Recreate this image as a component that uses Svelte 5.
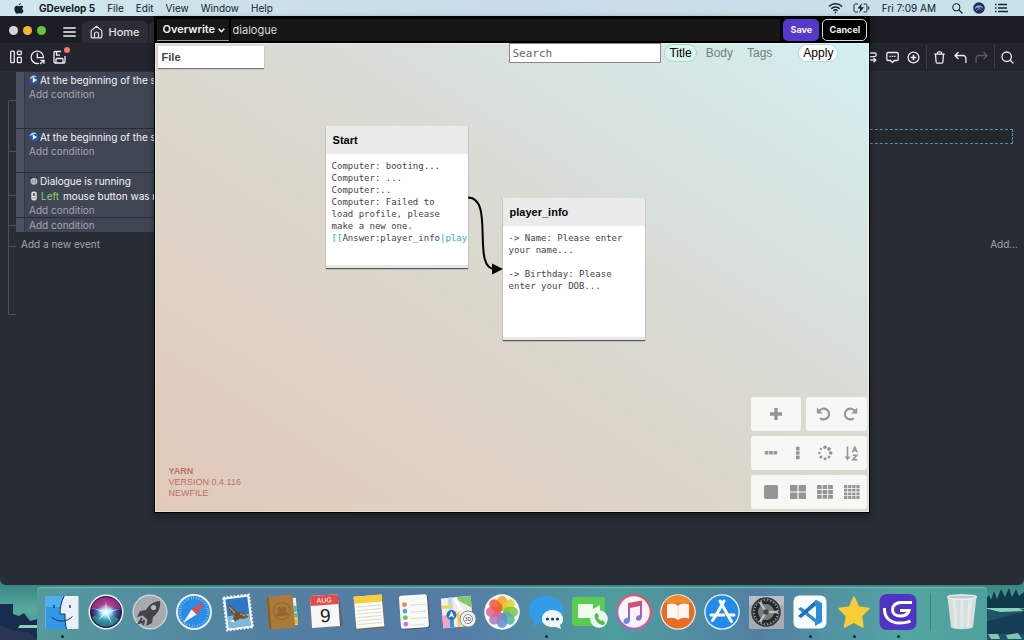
<script>
  const menus = ['File', 'Edit', 'View', 'Window', 'Help'];
  const letters = ['Title', 'Body', 'Tags'];
  let filter = $state('Title');
  let search = $state('');
  let variable = $state('dialogue');
  let mode = $state('Overwrite');

  const petals = [
    ['#f7a11b', 0], ['#d9d42c', 45], ['#7fc241', 90], ['#4fb59b', 135],
    ['#5b8fd6', 180], ['#a779bf', 225], ['#e0618b', 270], ['#ee5b35', 315]
  ];
  const ring = [0, 45, 90, 135, 180, 225, 270, 315];
  const teeth = Array.from({ length: 24 }, (_, i) => i * 15);
  const grid = (cols, rows, w, h, gap) =>
    Array.from({ length: cols * rows }, (_, i) => ({
      x: (i % cols) * (w + gap), y: Math.floor(i / cols) * (h + gap), w, h
    }));
  const sizes = [
    { label: 'Large nodes', cells: grid(1, 1, 14, 14, 0), w: 14, h: 14, r: 2 },
    { label: 'Medium nodes', cells: grid(2, 2, 7.4, 6.4, 1.2), w: 16, h: 14, r: 0.7 },
    { label: 'Small nodes', cells: grid(3, 3, 4.7, 4, 0.9), w: 16, h: 14, r: 0.6 },
    { label: 'Tiny nodes', cells: grid(4, 4, 3.3, 2.9, 0.8), w: 16, h: 14, r: 0.5 }
  ];
</script>

{#snippet home()}
  <svg width="13" height="14" viewBox="0 0 13 14" fill="none" stroke="currentColor" stroke-width="1.2" stroke-linejoin="round" stroke-linecap="round"><path d="M1.2 5.600 6.500 1.200l5.300 4.400V11.400a1.500 1.500 0 0 1-1.500 1.500H2.700a1.500 1.500 0 0 1-1.500-1.500ZM4.500 12.800V9a2 2 0 0 1 4 0v3.800"/></svg>
{/snippet}

{#snippet condition(kind)}
  <svg width="10" height="10" viewBox="0 0 10 10">
    {#if kind === 'scene'}
      <circle cx="5" cy="5" r="4.500" fill="#2457b0"/><path d="M.6 4A4.500 4.500 0 0 1 7.600 1.400L3.500 3Z" fill="#a9cdf6"/><path d="M3.800 2.400 8 5 3.800 7.700Z" fill="#fff"/>
    {:else if kind === 'dialogue'}
      <circle cx="5" cy="5.300" r="3.400" fill="#b9beba"/><path d="m3 4 1.500 1L3 6.500M6 3.500 7 5 5.500 6.800" stroke="#858a8c" fill="none"/><path d="M1 1.500h2M7 1.500h2" stroke="#222630"/>
    {:else}
      <rect x="2.300" y="0.500" width="5.400" height="9" rx="2" fill="#e4e4e0"/><rect x="3.800" y="2" width="2.400" height="3" fill="#6a6a6c"/><path d="M3 7h4" stroke="#999"/>
    {/if}
  </svg>
{/snippet}

<div class="desktop">
  <header class="menubar">
    <svg width="10" height="11" viewBox="0 0 20 23" fill="#16242f"><path d="M14 0c.2 2.500-2 4.800-4.300 4.800C9.500 2.500 11.700.2 14 0ZM17 12.200c0 3 2.600 4 2.700 4.100-.1.500-2.300 6.200-5 6.200-1.700 0-2-.9-4-.9s-2.500.9-4 .9C3.800 22.500.3 17 .3 12.300c0-4.300 2.800-6.700 5.500-6.700 1.900 0 3.300 1.200 4.500 1.200 1.100 0 2.900-1.300 5-1.300 1.500 0 3 .8 3.900 2.100-.4.300-2.200 1.600-2.200 4.600Z"/></svg>
    <nav>
      <b>GDevelop 5</b>
      {#each menus as m}<span>{m}</span>{/each}
    </nav>
    <div class="status">
      <svg width="15" height="12" viewBox="0 0 15 12" fill="none" stroke="#16242f" stroke-width="1.500"><path d="M1 4.500a9.300 9.300 0 0 1 13 0M3.200 6.700a6.200 6.200 0 0 1 8.600 0M5.400 8.800a3.100 3.100 0 0 1 4.200 0"/><circle cx="7.500" cy="10.600" r=".6" fill="#16242f" stroke-width=".6"/></svg>
      <svg width="17" height="10" viewBox="0 0 17 10" fill="none" stroke="#16242f"><path d="M5 1H2.500A1.500 1.500 0 0 0 1 2.500v5A1.500 1.500 0 0 0 2.500 9H5M10.500 1h2A1.500 1.500 0 0 1 14 2.500v5A1.500 1.500 0 0 1 12.500 9h-2M15.800 3.500v3"/><path d="M9 0 4.500 5.600h2.700L6.300 10 11 4.300H8Z" fill="#16242f" stroke="none"/></svg>
      <span>Fri 7:09 AM</span>
      <svg class="find" width="11" height="11" viewBox="0 0 11 11" fill="none" stroke="#16242f" stroke-width="1.100"><circle cx="4.300" cy="4.300" r="3.500"/><path d="m7 7 3.500 3.500"/></svg>
      <svg width="12" height="12" viewBox="0 0 12 12"><circle cx="6" cy="6" r="5.800" fill="#25265c"/><path d="M1.500 7.500C2 2.500 9 1.500 10.500 7 8.500 5 6.500 4.500 5.500 6 4.500 5.500 3 5.500 1.500 7.500Z" fill="#66b9e9"/><path d="M3 9c2-3 4-3 6-.5" stroke="#cf7ac9" fill="none"/></svg>
      <svg width="13" height="10" viewBox="0 0 13 10" stroke="#16242f" stroke-width="1.400"><path d="M3 1.500h9M3 5h9M3 8.500h10M0 1.500h1.500M0 5h1.500M0 8.500h1.500"/></svg>
    </div>
  </header>

  <main class="window">
    <div class="titlebar">
      <span class="light grey"></span><span class="light amber"></span><span class="light green"></span>
      <button class="plain burger" aria-label="Menu"><svg width="13" height="10" viewBox="0 0 13 10" stroke="#eee" stroke-width="1.300" stroke-linecap="round"><path d="M.7 1h11.600M.7 5h11.600M.7 9h11.600"/></svg></button>
      <button class="tab">{@render home()}Home</button>
      <button class="tab" aria-label="Scene tab"></button>
    </div>

    <div class="toolbar">
      <div class="tools">
        <button class="plain" aria-label="Panels"><svg width="12" height="14" viewBox="0 0 12 14" fill="none" stroke="#eee" stroke-width="1.300"><rect x=".7" y="1.200" width="3.600" height="11.500" rx="1"/><rect x="7.400" y="1.200" width="3.900" height="3.400" rx=".8"/><rect x="7.400" y="7.300" width="3.900" height="5.400" rx=".8"/></svg></button>
        <button class="plain" aria-label="History"><svg width="15" height="15" viewBox="0 0 15 15" fill="none" stroke="#eee" stroke-width="1.300" stroke-linecap="round"><path d="M13.500 7.200A6.200 6.200 0 1 0 8.500 13.400M7.300 3.500v4.200h6"/><path d="M11 10.300h3v3M13.800 10.500l-3.300 3"/></svg></button>
        <button class="plain save-tool" aria-label="Save project"><svg width="13" height="14" viewBox="0 0 13 14" fill="none" stroke="#eee" stroke-width="1.300" stroke-linejoin="round"><path d="M8 1.500H2.200A1.200 1.200 0 0 0 1 2.700v9A1.200 1.200 0 0 0 2.200 13h8.600a1.200 1.200 0 0 0 1.200-1.200V6M3.500 1.500v3.700H7M3 13V9.500A1 1 0 0 1 4 8.500h5a1 1 0 0 1 1 1V13"/></svg><i class="badge"></i></button>
      </div>
      <div class="tools right">
        <button class="plain" aria-label="Add event"><svg width="14" height="14" viewBox="0 0 14 14" fill="none" stroke="#eee" stroke-width="1.300"><path d="M2 3h8.500a1.800 1.800 0 0 1 0 3.600H6M5 10h6.500M9.500 8l2.300 2-2.300 2.200"/></svg></button>
        <button class="plain" aria-label="Add comment"><svg width="13" height="13" viewBox="0 0 13 13" fill="none" stroke="#eee" stroke-width="1.300" stroke-linejoin="round"><path d="M2 1.500h9a1.200 1.200 0 0 1 1.200 1.200v5.600A1.200 1.200 0 0 1 11 9.500H8.300L6.500 11.500 4.700 9.500H2A1.200 1.200 0 0 1 .8 8.300V2.700A1.200 1.200 0 0 1 2 1.500Z"/><path d="M3.500 5.400h1.400m.9 0h1.400m.9 0h1.400"/></svg></button>
        <button class="plain" aria-label="Add"><svg width="13" height="13" viewBox="0 0 13 13" fill="none" stroke="#eee" stroke-width="1.300"><circle cx="6.500" cy="6.500" r="5.400"/><path d="M6.500 3.700v5.600M3.700 6.500h5.600" stroke-width="1.700"/></svg></button>
        <span class="rule"></span>
        <button class="plain" aria-label="Delete"><svg width="13" height="13" viewBox="0 0 12 13" fill="none" stroke="#eee" stroke-width="1.300" stroke-linejoin="round"><path d="M.8 3.200h10.400M2 3.200l.6 7.800a1.200 1.200 0 0 0 1.200 1.100h4.400A1.200 1.200 0 0 0 9.400 11l.6-7.800M4 3V1.800A1 1 0 0 1 5 .8h2a1 1 0 0 1 1 1V3"/></svg></button>
        <button class="plain" aria-label="Undo"><svg width="13" height="12" viewBox="0 0 13 12" fill="none" stroke="#eee" stroke-width="1.300"><path d="M4.500 1 1 4.500 4.500 8M1 4.500h8A2.800 2.800 0 0 1 11.900 7.300V12"/></svg></button>
        <button class="plain" aria-label="Redo"><svg width="13" height="12" viewBox="0 0 13 12" fill="none" stroke="#5a5c66" stroke-width="1.300"><path d="M8.500 1 12 4.500 8.500 8M12 4.500H4A2.800 2.800 0 0 0 1.100 7.300V12"/></svg></button>
        <span class="rule"></span>
        <button class="plain" aria-label="Search events"><svg width="13" height="13" viewBox="0 0 13 13" fill="none" stroke="#eee" stroke-width="1.300" stroke-linecap="round"><circle cx="5.700" cy="5.700" r="4.700"/><path d="m9.200 9.200 2.800 2.800"/></svg></button>
      </div>
    </div>

    <div class="sheet">
      <div class="events">
        <section class="event tall">
          <div class="conditions">
            <p>{@render condition('scene')}At the beginning of the scene</p>
            <button class="add">Add condition</button>
          </div>
          <div></div>
        </section>
        <section class="event medium">
          <div class="conditions">
            <p>{@render condition('scene')}At the beginning of the scene</p>
            <button class="add">Add condition</button>
          </div>
          <div><div class="drop"></div></div>
        </section>
        <section class="event">
          <div class="conditions">
            <p>{@render condition('dialogue')}Dialogue is running</p>
            <p>{@render condition('mouse')}<em>Left</em>&nbsp;mouse button was released</p>
            <button class="add">Add condition</button>
          </div>
          <div></div>
        </section>
        <section class="event">
          <div class="conditions"><button class="add">Add condition</button></div>
          <div></div>
        </section>
      </div>
      <div class="footer"><button class="add">Add a new event</button><button class="add">Add...</button></div>
      <svg class="tree" width="8" height="216" viewBox="0 0 8 216" fill="none" stroke="#4b515b"><path d="M8 .5H.5v214H8M.5 51.500H8M.5 95.500H8M.5 125.500H8M.5 146.500H8"/></svg>
    </div>

    <div class="dialog">
      <div class="dialog-bar">
        <div class="mode"><select aria-label="Save mode" bind:value={mode}><option>Overwrite</option><option>Append</option></select><svg width="7" height="5" viewBox="0 0 7 5" fill="none" stroke="#fff" stroke-width="1.500"><path d="m.7.700 2.800 3L6.300.700"/></svg></div>
        <input class="name" aria-label="Variable name" bind:value={variable}/>
        <button class="save">Save</button>
        <button class="cancel">Cancel</button>
      </div>
      <div class="yarn">
        <div class="yarn-top">
          <button class="file">File</button>
          <div class="filters">
            <input class="search" placeholder="Search" aria-label="Search nodes" bind:value={search}/>
            {#each letters as l}
              <button class="pill" class:on={filter === l} onclick={() => (filter = l)}>{l}</button>
            {/each}
            <button class="pill apply">Apply</button>
          </div>
        </div>

        <div class="canvas">
          <svg class="link" width="40" height="84" viewBox="0 0 40 84"><path d="M0 6.500C27 6.500 3 78 27 78" fill="none" stroke="#000" stroke-width="2"/><path d="m24 72.500 11 5.500-11 5.500Z"/></svg>
          <article class="node start">
            <h2>Start</h2>
            <pre>Computer: booting...
Computer: ...
Computer:..
Computer: Failed to
load profile, please
make a new one.
<i>[[</i>Answer:player_info<i>|play</i></pre>
          </article>
          <article class="node info">
            <h2>player_info</h2>
            <pre>-&gt; Name: Please enter
your name...

-&gt; Birthday: Please
enter your DOB...</pre>
          </article>
        </div>

        <div class="yarn-bottom">
          <p class="version"><b>YARN</b><br/>VERSION 0.4.116<br/>NEWFILE</p>
          <div class="pads">
            <div class="pad-row">
              <div class="pad single"><button class="plain" aria-label="Add node"><svg width="12" height="12" viewBox="0 0 12 12" stroke="#949694" stroke-width="3.300"><path d="M6 0v12M0 6h12"/></svg></button></div>
              <div class="pad double">
                <button class="plain" aria-label="Undo change"><svg width="15" height="14" viewBox="0 0 15 14" fill="none" stroke="#949694" stroke-width="2.200"><path d="M3.200 4A5.400 5.400 0 1 1 4.200 11.200"/><path d="M.8.500v6.100h6Z" fill="#949694" stroke="none"/></svg></button>
                <button class="plain" aria-label="Redo change"><svg width="15" height="14" viewBox="0 0 15 14" fill="none" stroke="#949694" stroke-width="2.200"><path d="M11.800 4A5.400 5.400 0 1 0 10.800 11.200"/><path d="M14.200.5v6.100h-6Z" fill="#949694" stroke="none"/></svg></button>
              </div>
            </div>
            <div class="pad four">
              <button class="plain" aria-label="Align horizontally"><svg width="14" height="4" viewBox="0 0 14 4" fill="#949694"><rect x=".8" width="3.600" height="3.600" rx=".7"/><rect x="5.200" width="3.600" height="3.600" rx=".7"/><rect x="9.600" width="3.600" height="3.600" rx=".7"/></svg></button>
              <button class="plain" aria-label="Align vertically"><svg width="4" height="14" viewBox="0 0 4 14" fill="#949694"><rect y=".8" width="3.600" height="3.600" rx=".7"/><rect y="5.200" width="3.600" height="3.600" rx=".7"/><rect y="9.600" width="3.600" height="3.600" rx=".7"/></svg></button>
              <button class="plain" aria-label="Arrange in a spiral"><svg width="16" height="16" viewBox="-8 -8 16 16" fill="#949694">{#each ring as a, i}<circle cx="0" cy="-5.700" r={i < 3 ? 1.8 : i > 5 ? 1.2 : 1.500} transform="rotate({a})"/>{/each}</svg></button>
              <button class="plain" aria-label="Sort alphabetically"><svg width="15" height="15" viewBox="0 0 15 15" fill="none" stroke="#949694" stroke-width="1.600"><path d="M3.500.5v12"/><path d="M.7 10.500h5.600l-2.800 4Z" fill="#949694" stroke="none"/><path d="m8.500 6.300 2.300-5.300 2.300 5.300M9.300 4.500h3M8.800 9.200h4l-4 4.600h4.500"/></svg></button>
            </div>
            <div class="pad four">
              {#each sizes as s}
                <button class="plain" aria-label={s.label}><svg width={s.w} height={s.h} viewBox="0 0 {s.w} {s.h}" fill="#949694">{#each s.cells as c}<rect x={c.x} y={c.y} width={c.w} height={c.h} rx={s.r}/>{/each}</svg></button>
              {/each}
            </div>
          </div>
        </div>
      </div>
    </div>
  </main>

  <footer class="shore">
    <svg class="scenery" viewBox="0 0 1024 60" preserveAspectRatio="none">
      <defs><linearGradient id="sea" x1="0" y1="0" x2="0" y2="1"><stop offset="0" stop-color="#347f80"/><stop offset=".5" stop-color="#57a99d"/><stop offset="1" stop-color="#428c8c"/></linearGradient></defs>
      <rect width="1024" height="60" fill="url(#sea)"/>
      <path d="M0 24h13v10l6 2 5-3 6 8 8-2v21H0Z" fill="#172c50"/><path d="M0 45 12 50l16 2 10 8H0Z" fill="#2a3555"/><path d="M20 45h18v3H18Z" fill="#8bd0b8"/>
      <path d="M984 22l5-7 2 5 3-9 3 8 4-10 4 8 4-9 3 9 4-8 3 7 5-4v16h-40Z" fill="#0f3a49"/><path d="M984 29h40v31h-40Z" fill="#1f5468"/><path d="M984 28h34l6 3-24 1Z" fill="#8ccfc0"/><path d="m984 42 40-10v22h-40Z" fill="#173d56"/><path d="M988 54h10l2 5h-9ZM1006 55l12-2 4 6h-14Z" fill="#83c4b4"/>
    </svg>
    <nav class="dock" aria-label="Dock">
      <a href="#finder" class="open" aria-label="Finder"><svg viewBox="0 0 40 40"><rect x="3.500" y="4" width="33" height="33" rx="1" fill="#eaf0f6"/><path d="M3.500 4h18.700C19 10 18 16 18 22h5c0 6 .3 10 1.500 15h-21Z" fill="#3397e8"/><path d="M3.500 4h18.700C20 8 19 11 18.500 15H3.500Z" fill="#50b0ef"/><path d="M12 13v3M28 13v3" stroke="#162b45" stroke-width="1.300"/><path d="M9.500 25c6 5.500 15 5.500 21-.500M22.200 4C19 10 18 16 18 22h5c0 6 .3 10 1.500 15" fill="none" stroke="#183657" stroke-width="1"/></svg></a>
      <a href="#siri" aria-label="Siri"><svg viewBox="0 0 40 40"><defs><radialGradient id="siri"><stop stop-color="#e6ffff"/><stop offset=".25" stop-color="#8fd0e3"/><stop offset=".65" stop-color="#4b4f9a"/><stop offset="1" stop-color="#1d1533"/></radialGradient><radialGradient id="glow"><stop stop-color="#fff"/><stop offset=".4" stop-color="#d8f8ff" stop-opacity=".8"/><stop offset="1" stop-color="#bff" stop-opacity="0"/></radialGradient></defs><circle cx="20" cy="20" r="17.500" fill="#eee"/><circle cx="20" cy="20" r="16" fill="url(#siri)"/><path d="M5 18C7 1 33 1 35 18c-6-5-12-3-15 2-4-5-9-6-15-2Z" fill="#c22f86" opacity=".75"/><path d="M6 25l14-5 13 7c-6 10-21 11-27-2Z" fill="#27b3a8" opacity=".6"/><path d="M20 8l.8 11L34 17 21.500 20.800 26 32l-6.500-10-8 7 6.500-8.500L6 16l13 3Z" fill="#efffff" opacity=".8"/><circle cx="20" cy="20" r="8" fill="url(#glow)"/></svg></a>
      <a href="#launchpad" aria-label="Launchpad"><svg viewBox="0 0 40 40"><circle cx="20" cy="20" r="17.500" fill="#d4d7d8"/><circle cx="20" cy="20" r="16.300" fill="#a8abad"/><path d="M30 9c-7 .5-11 4-14 9l-6 1-3 6 6-1.500 4.500 4.500L16 34l6-3 1-6c5-4 8-9 7-16Z" fill="#434548"/><circle cx="23.500" cy="15.500" r="2.600" fill="#b8babb"/><path d="m12 26-3 5 6-2M14 28l-1 5" stroke="#434548" stroke-width="2" fill="none"/></svg></a>
      <a href="#safari" aria-label="Safari"><svg viewBox="0 0 40 40"><circle cx="20" cy="20" r="18" fill="#e8eef3"/><circle cx="20" cy="20" r="16" fill="#2b8ce6"/><circle cx="20" cy="20" r="14" fill="none" stroke="#b8e0ff" stroke-width="2" stroke-dasharray=".6 2"/><path d="m31 9-13.500 8.500L22.500 22.500Z" fill="#ee4748"/><path d="m9 31 13.500-8.500-5-5Z" fill="#f4f6f7"/></svg></a>
      <a href="#mail" aria-label="Mail"><svg viewBox="0 0 40 40"><g transform="rotate(-7 20 20)"><rect x="7" y="4" width="26" height="33" fill="#f6f6f1" stroke="#f6f6f1" stroke-width="2" stroke-dasharray="2 1.500"/><rect x="9" y="6" width="22" height="29" fill="#2c78c6"/><path d="M9 23h22v12H9Z" fill="#83b6df"/><path d="M11 11c4 2 6 6 8 9 4 0 8 2 11 6-4 2-7 1-9 1l-5 2-2-3 2-4c-4-3-5-7-5-11Z" fill="#725130"/><path d="m12 14 5 7M22 22l5 3" stroke="#c09a61" stroke-width="1.200"/><path d="m15 27-4 1 4 2Z" fill="#fff"/></g></svg></a>
      <a href="#contacts" aria-label="Contacts"><svg viewBox="0 0 40 40"><g transform="rotate(-5 20 20)"><path d="M31 7h4v27h-4Z" fill="#eee"/><path d="M32 15h3v6h-3Z" fill="#4bb9b0"/><path d="M32 22h3v5h-3Z" fill="#7aba58"/><path d="M32 28h3v5h-3Z" fill="#ebac37"/><rect x="6" y="3.500" width="26" height="33" rx="2" fill="#ac7a38"/><path d="M7 4v32" stroke="#8a5d28" stroke-width="2"/><circle cx="20" cy="19" r="8.500" fill="none" stroke="#946630"/><path d="M13 24c1-3 3-3 3-5-2-4 3-6 4-2 1-4 6-2 4 2 0 2 2 2 3 5Z" fill="#946630"/></g></svg></a>
      <a href="#calendar" aria-label="Calendar"><svg viewBox="0 0 40 40"><g transform="rotate(-4 20 20)"><path d="M5 6h29l2 29H5Z" fill="#5e6265"/><path d="M5 3h28v32H5Z" fill="#f7f7f6"/><path d="M5 3h28v10H5Z" fill="#e14b49"/><text x="19" y="10.500" font-family="Liberation Sans, sans-serif" font-size="7" text-anchor="middle" fill="#fff">AUG</text><text x="19" y="30" font-family="Liberation Sans, sans-serif" font-size="19" text-anchor="middle" fill="#222">9</text></g></svg></a>
      <a href="#notes" aria-label="Notes"><svg viewBox="0 0 40 40"><g transform="rotate(-5 20 20)"><rect x="5.500" y="4" width="28" height="33" fill="#756f54"/><rect x="5" y="3.500" width="28" height="32" fill="#fcfcf6"/><rect x="5" y="3.500" width="28" height="7" fill="#f7ce3b"/><path d="M7 14h24M7 17.500h24M7 21h24M7 24.500h24M7 28h24M7 31.500h24" stroke="#d5d5ce" stroke-width=".8"/></g></svg></a>
      <a href="#reminders" aria-label="Reminders"><svg viewBox="0 0 40 40"><g transform="rotate(-4 20 20)"><rect x="7" y="4" width="28" height="33" rx="2.500" fill="#44545b"/><rect x="6" y="3" width="28" height="33" rx="2.500" fill="#f9f9f9"/><circle cx="11" cy="12" r="2.400" fill="#ed8847"/><circle cx="11" cy="18.500" r="2.400" fill="#4ba7e8"/><circle cx="11" cy="25" r="2.400" fill="#70c74d"/><circle cx="11" cy="31.500" r="2.400" fill="#c67add"/><path d="M16 13h16M16 20h16M16 26.500h16M16 33h14" stroke="#d3d3d3" stroke-width=".8"/></g></svg></a>
      <a href="#maps" aria-label="Maps"><svg viewBox="0 0 40 40"><g transform="rotate(-5 20 20)"><rect x="4" y="5" width="30" height="30" fill="#f0eee5"/><path d="M16 5h18v12Z" fill="#8cc873"/><path d="M4 22h7v13H4Z" fill="#efa8bd"/><path d="M19 5c1 12 8 17 15 18" fill="none" stroke="#fff" stroke-width="3"/><path d="M13 5v30" stroke="#b8d8f0" stroke-width="4"/><path d="M13 22v13" stroke="#388cdd" stroke-width="4"/><path d="M4 14h11M20 20v15" stroke="#f2d15d" stroke-width="3"/></g><circle cx="13.500" cy="23" r="5" fill="#266fc1"/><path d="m13.500 19-3 7 3-2 3 2Z" fill="#fff"/><circle cx="30" cy="27" r="8" fill="#f3f4f4" stroke="#848b90"/><circle cx="30" cy="27" r="4.500" fill="#fff" stroke="#888"/><text x="30" y="29" font-family="Liberation Sans, sans-serif" font-size="5" text-anchor="middle" fill="#444">3D</text></svg></a>
      <a href="#photos" aria-label="Photos"><svg viewBox="0 0 40 40"><circle cx="20" cy="20" r="17.700" fill="#f6f7f5"/>{#each petals as [color, angle]}<rect x="15" y="4" width="10" height="15" rx="5" fill={color} opacity=".85" transform="rotate({angle} 20 20)"/>{/each}</svg></a>
      <a href="#messages" class="open" aria-label="Messages"><svg viewBox="0 0 40 40"><path d="M20 4c10 0 17 6 17 14s-7 14-17 14c-3 0-5-.5-7-1l-6 4 1-7c-3-2-5-6-5-10C3 10 10 4 20 4Z" fill="#329bea"/><path d="M26 18c7 0 11 4 11 9 0 3-1 5-3 6l1 4-5-2c-9 1-14-3-14-8s4-9 10-9Z" fill="#eef8fc"/><circle cx="21.500" cy="27" r="1.500" fill="#163e60"/><circle cx="26.500" cy="27" r="1.500" fill="#163e60"/><circle cx="31.500" cy="27" r="1.500" fill="#163e60"/></svg></a>
      <a href="#facetime" aria-label="FaceTime"><svg viewBox="0 0 40 40"><rect x="2" y="5" width="33" height="29" rx="3" fill="#5bcc50"/><path d="M8 12h15v5l7-4v14l-7-4v3H8Z" fill="#f1faef"/><circle cx="29" cy="27" r="8.800" fill="#eff8ee"/><path d="m25 22 2-1 2 3-1 2 3 3 2-1 2 3-1 2c-5 1-11-6-9-11Z" fill="#55bd4b"/></svg></a>
      <a href="#itunes" aria-label="iTunes"><svg viewBox="0 0 40 40"><defs><linearGradient id="tune" x1="0" y1="1" x2="1" y2="0"><stop stop-color="#a559e3"/><stop offset=".5" stop-color="#e8568a"/><stop offset="1" stop-color="#ec4a58"/></linearGradient><linearGradient id="note" x1="0" y1="0" x2="0" y2="1"><stop stop-color="#e9495b"/><stop offset=".55" stop-color="#af5acb"/><stop offset="1" stop-color="#4f9ae9"/></linearGradient></defs><circle cx="20" cy="20" r="16.700" fill="#f8f5f8" stroke="url(#tune)" stroke-width="2"/><path d="M14 11 28 8.500v16c0 5-6 5.500-6 2 0-3 2.500-3 4-3.500V14l-10 2v12c0 5-6.500 5-6.500 1.500 0-3 3-3.500 4.500-4Z" fill="url(#note)"/></svg></a>
      <a href="#books" aria-label="Books"><svg viewBox="0 0 40 40"><circle cx="20" cy="20" r="17.800" fill="#f0e9df"/><circle cx="20" cy="20" r="16.500" fill="#e96b24"/><path d="M6 11a16.500 16.500 0 0 1 28 0Z" fill="#f28a2c"/><path d="M20 14c-3-3-7-3-11-1.500v14c4-1.500 8-1 11 1.500 3-2.500 7-3 11-1.500v-14C27 11 23 11 20 14Z" fill="#fff8ee"/><path d="M20 14v13" stroke="#d8cabc" stroke-width=".8"/></svg></a>
      <a href="#appstore" aria-label="App Store"><svg viewBox="0 0 40 40"><circle cx="20" cy="20" r="17.800" fill="#e7f1fa"/><circle cx="20" cy="20" r="16.400" fill="#248ce8"/><path d="m18 9 10 18M22 9 13 25M9 23h13M26 23h6M12 26l-1.500 2.500M28 27l1.500 2.500" stroke="#fff" stroke-width="3" stroke-linecap="round"/></svg></a>
      <a href="#preferences" aria-label="System Preferences"><svg viewBox="0 0 40 40"><rect x="3" y="4" width="35" height="33" rx="1" fill="#a6acb0"/><path d="M3 4h35v9H3Z" fill="#b8bfc4"/><circle cx="20" cy="20" r="14" fill="#8c9092" stroke="#303438" stroke-width="1.500"/>{#each teeth as angle}<path d="M20 7v3" stroke="#272b2e" stroke-width="1.800" transform="rotate({angle} 20 20)"/>{/each}<circle cx="20" cy="20" r="9.500" fill="#777c7e" stroke="#24282a" stroke-width="3"/><path d="M20 20h12M20 20l-6-10M20 20l-6 10" stroke="#b9bec0" stroke-width="2.500"/><circle cx="20" cy="20" r="2.800" fill="#40474c"/></svg></a>
      <a href="#code" class="open" aria-label="Visual Studio Code"><svg viewBox="0 0 40 40"><rect x="3.500" y="3.500" width="33" height="33" rx="6" fill="#f8fafb"/><path d="m8 17 3-2 19 14-3 3Z" fill="#3489cf"/><path d="m8 24 3 2 19-16-4-2Z" fill="#1f73b8"/><path d="m25 8 7 3v19l-7 4Z" fill="#2a8fd8"/><path d="m26 14-8 6.500 8 6.500Z" fill="#f8fafb"/></svg></a>
      <a href="#favourites" class="open" aria-label="Favourites"><svg viewBox="0 0 40 40"><path d="m20 5 4.500 10L35 16.500l-7.500 7.500L29 35l-9-5-9.500 5 2-11L5 16.500 15.500 15Z" fill="#f9cd35" stroke="#f9cd35" stroke-width="1.500" stroke-linejoin="round"/></svg></a>
      <a href="#gdevelop" class="open" aria-label="GDevelop"><svg viewBox="0 0 40 40"><rect x="1.500" y="2" width="37" height="36" rx="7" fill="#5035c5"/><path d="M34 10.500H23c-5 0-8.500 3-8.500 7s3 6.500 8 6.500c5 0 7.500-2 8.500-5.500h-9M6.500 16c-.5 10 6 15 15 15 4 0 8-.5 11-2" fill="none" stroke="#fff" stroke-width="3"/></svg></a>
      <span class="divider"></span>
      <a href="#trash" aria-label="Trash"><svg viewBox="0 0 40 40"><path d="M5.500 5 9 35c1 3 20 3 22 0L34.500 5Z" fill="#d8dddd"/><path d="m12 7 2 28M20 7v29M28 7l-2 28" stroke="#e4e9e9" stroke-width="3"/><ellipse cx="20" cy="5" rx="14.500" ry="2.200" fill="#bcc9c9" stroke="#f2f4f4" stroke-width="1.200"/></svg></a>
    </nav>
  </footer>
</div>

<style>
  :global(body) { margin: 0; background: #347f80; }
  .desktop { min-height: 100vh; display: flex; flex-direction: column; overflow: hidden; background: #347f80; font: 10px/14px Inter, sans-serif; }
  .desktop :where(*) { box-sizing: border-box; }
  button, input, select { font: inherit; color: inherit; margin: 0; padding: 0; border: 0; background: none; }
  button { cursor: pointer; }
  svg { display: block; flex: none; }
  p, h2, pre { margin: 0; }
  .plain { display: flex; align-items: center; justify-content: center; }

  .menubar { height: 16px; display: flex; align-items: center; padding: 0 16px 0 14px; background: linear-gradient(90deg, #cfe7ec, #c9dbea 50%, #c8e3ea); color: #13202a; }
  .menubar nav, .status { display: flex; align-items: center; gap: 12px; }
  .menubar nav { margin-left: 15px; }
  .status { margin-left: auto; gap: 10px; }
  .status span { margin-left: 2px; }
  .status .find { margin-left: 6px; }

  .window { position: relative; z-index: 1; flex: 1; display: flex; flex-direction: column; background: #282c34; border-radius: 0 0 6px 6px; }
  .titlebar { height: 27px; display: flex; align-items: center; padding-left: 9px; gap: 5px; background: #1d1d26; }
  .light { width: 9px; height: 9px; margin-top: 2px; border-radius: 50%; }
  .grey { background: #d4d4d8; }
  .amber { background: #f8b62e; }
  .green { background: #61c63e; }
  .burger { width: 26px; margin: 4px 0 0 5px; }
  .tab { align-self: flex-end; display: flex; align-items: center; justify-content: center; gap: 5px; width: 66px; height: 22px; margin-right: -4px; border-radius: 6px 6px 0 0; background: #2d2d38; color: #e2e2e5; font-size: 11px; font-weight: 500; }
  .burger + .tab { margin-left: -5px; }
  .toolbar { height: 28px; display: flex; justify-content: space-between; align-items: center; padding: 0 10px; background: #23242d; }
  .tools { display: flex; align-items: center; gap: 8px; }
  .save-tool { position: relative; }
  .badge { position: absolute; right: -4px; top: -3px; width: 6px; height: 6px; border-radius: 50%; background: #ee7a66; }
  .rule { width: 1px; height: 24px; margin: 0 -2px; background: #3b3c47; }

  .sheet { position: relative; flex: 1; color: #f4f5f7; }
  .events { padding: 1px 0 0 16px; }
  .event { display: grid; grid-template-columns: 35% 1fr; border-bottom: 1px solid #282c37; }
  .tall { min-height: 57px; }
  .medium { min-height: 44px; }
  .conditions { padding-left: 5px; border-left: 8px solid #4b5162; background: #404554; box-shadow: inset 1px 0 #343846; }
  .conditions p { display: flex; align-items: center; height: 15px; gap: 1px; white-space: nowrap; overflow: hidden; }
  .conditions em { font-style: normal; color: #8fcf73; margin-left: 1px; }
  .add { display: block; height: 14px; color: #a2a6ae; text-align: left; white-space: nowrap; }
  .drop { height: 15px; margin-right: 11px; border: 1px dashed #4f93a8; background: #24282c; }
  .footer { display: flex; justify-content: space-between; padding: 4px 6px 0 21px; }
  .tree { position: absolute; left: 8px; top: 29px; }

  .dialog { position: absolute; left: 15%; width: 70%; top: 0; min-height: 497px; display: flex; flex-direction: column; background: #000; border: solid #000; border-width: 0 1px 1px; box-sizing: border-box; box-shadow: 0 3px 8px #0005; }
  .dialog-bar { height: 27px; display: flex; align-items: center; gap: 2px; padding: 0 2px; color: #f4f4f4; font-size: 11px; }
  .mode { position: relative; width: 72px; height: 22px; border-bottom: 1px solid #999; background: #171717; }
  .mode select { appearance: none; width: 100%; height: 100%; padding-left: 6px; font-weight: 600; outline: 0; }
  .mode svg { position: absolute; right: 4px; top: 9px; pointer-events: none; }
  .name { flex: 1; min-width: 0; height: 22px; padding-left: 2px; background: #161616; color: #ddd; outline: 0; }
  .save, .cancel { height: 22px; margin-left: 1px; border-radius: 5px; font-size: 9px; font-weight: 700; }
  .save { width: 36px; background: #5439cb; }
  .cancel { width: 45px; border: 1px solid #d8d8d8; }

  .yarn { flex: 1; display: flex; flex-direction: column; background: linear-gradient(to top right, #e1c9b8 0%, #dfd1c4 25%, #dad8cf 50%, #d8e2de 75%, #d2eff1 100%); font-family: "Liberation Sans", sans-serif; box-shadow: inset 0 0 0 1px #ffffff55; }
  .yarn-top { display: flex; justify-content: space-between; align-items: flex-start; padding: 0 31px 0 3px; }
  .file { width: 106px; height: 22px; margin-top: 3px; padding-left: 4px; text-align: left; font-size: 11px; font-weight: 700; color: #444; background: #fff; box-shadow: 0 1px 1px #777; }
  .filters { display: flex; align-items: center; height: 20px; font-size: 12px; color: #777e7e; }
  .search { width: 152px; height: 20px; padding: 0 2px; margin-right: 3px; border: 1px solid #888; background: #fff; color: #555; font: 11px "DejaVu Sans Mono", monospace; outline: 0; }
  .search::placeholder { color: #666; opacity: 1; }
  .pill { height: 18px; padding: 0 4px; margin-right: 4px; border: 1px solid transparent; border-radius: 9px; }
  .on { background: #dcf4ef; border-color: #aad9cf; color: #000; }
  .apply { margin: 0 0 0 17px; background: #fff; border-color: #b9d8d3; color: #000; }

  .canvas { position: relative; flex: 1; }
  .node { position: absolute; width: 142px; height: 142px; overflow: hidden; background: #fff; border-bottom: 3px solid #e8e8e8; box-shadow: 0 1px 1px #555; }
  .start { left: 171px; top: 58px; }
  .info { left: 348px; top: 130px; }
  .node h2 { height: 28px; padding-left: 7px; background: #ebebeb; font-size: 11px; line-height: 28px; color: #000; }
  .node pre { padding: 6px; font: 9px/12px "DejaVu Sans Mono", monospace; color: #444; }
  .node i { font-style: normal; color: #2aaebd; }
  .link { position: absolute; left: 313px; top: 123px; }

  .yarn-bottom { display: flex; justify-content: space-between; align-items: flex-end; padding: 0 2px 3px 14px; }
  .version { font-size: 9px; line-height: 11px; color: #bd716a; padding-bottom: 10px; }
  .pads { display: flex; flex-direction: column; gap: 5px; }
  .pad-row { display: flex; gap: 5px; }
  .pad { display: flex; justify-content: space-around; height: 34px; padding: 0 4px; border-radius: 3px; background: #f5f8f5; }
  .pad button { width: 27px; }
  .four { width: 116px; padding: 0 2px 0 6px; }
  .single { width: 50px; }
  .double { width: 61px; }

  .shore { position: relative; height: 55px; display: flex; align-items: flex-end; justify-content: center; isolation: isolate; }
  .scenery { position: absolute; inset: -5px 0 0; width: 100%; height: 60px; z-index: -1; }
  .dock { display: flex; height: 53px; padding: 5px 5px 0; gap: 4px; border-radius: 4px 4px 0 0; background: linear-gradient(90deg, #559b9e, #537fa1 24%, #557ba7 44%, #4f9d9d 61%, #527fa4 76%, #53a5a1 91%, #4da09b); box-shadow: inset 0 1px #78b5b5; }
  .dock a { position: relative; width: 40px; height: 40px; }
  .dock svg { width: 40px; height: 40px; }
  .open::after { content: ""; position: absolute; left: 19px; top: 43px; width: 3px; height: 3px; border-radius: 50%; background: #102b3c; }
  .divider { width: 1px; height: 38px; margin: 1px 7px 0 8px; background: #3c7f80; }
</style>
